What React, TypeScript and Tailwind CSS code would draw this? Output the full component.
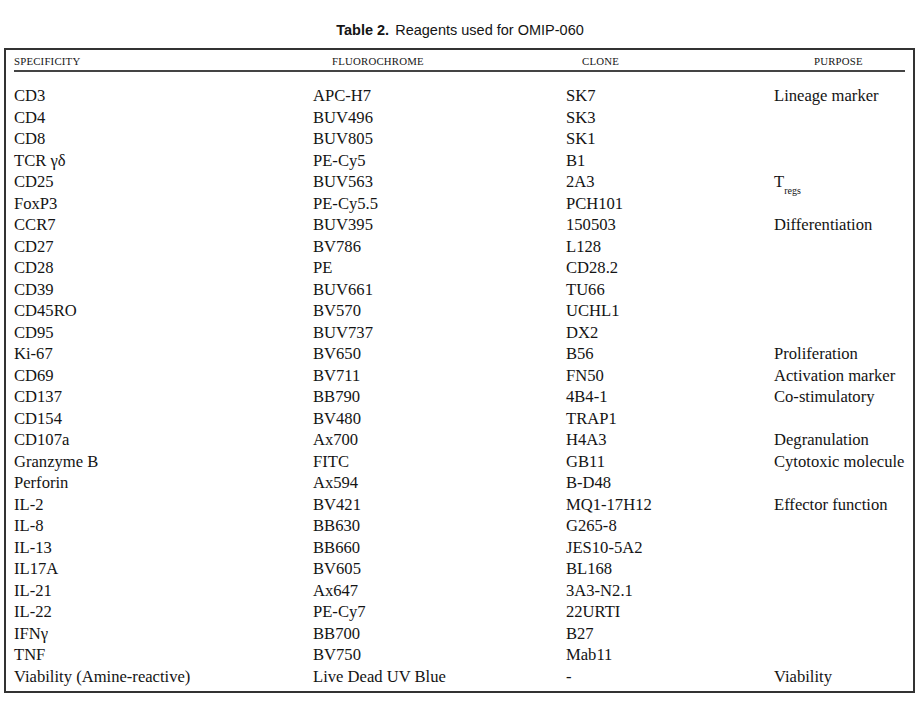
import React from 'react';

type Row = [string, string, string, React.ReactNode?];

const rows: Row[] = [
  ['CD3', 'APC-H7', 'SK7', 'Lineage marker'],
  ['CD4', 'BUV496', 'SK3'],
  ['CD8', 'BUV805', 'SK1'],
  ['TCR γδ', 'PE-Cy5', 'B1'],
  ['CD25', 'BUV563', '2A3', <span key="t">T<sub className="text-[10px] align-[-4px]">regs</sub></span>],
  ['FoxP3', 'PE-Cy5.5', 'PCH101'],
  ['CCR7', 'BUV395', '150503', 'Differentiation'],
  ['CD27', 'BV786', 'L128'],
  ['CD28', 'PE', 'CD28.2'],
  ['CD39', 'BUV661', 'TU66'],
  ['CD45RO', 'BV570', 'UCHL1'],
  ['CD95', 'BUV737', 'DX2'],
  ['Ki-67', 'BV650', 'B56', 'Proliferation'],
  ['CD69', 'BV711', 'FN50', 'Activation marker'],
  ['CD137', 'BB790', '4B4-1', 'Co-stimulatory'],
  ['CD154', 'BV480', 'TRAP1'],
  ['CD107a', 'Ax700', 'H4A3', 'Degranulation'],
  ['Granzyme B', 'FITC', 'GB11', 'Cytotoxic molecule'],
  ['Perforin', 'Ax594', 'B-D48'],
  ['IL-2', 'BV421', 'MQ1-17H12', 'Effector function'],
  ['IL-8', 'BB630', 'G265-8'],
  ['IL-13', 'BB660', 'JES10-5A2'],
  ['IL17A', 'BV605', 'BL168'],
  ['IL-21', 'Ax647', '3A3-N2.1'],
  ['IL-22', 'PE-Cy7', '22URTI'],
  ['IFNγ', 'BB700', 'B27'],
  ['TNF', 'BV750', 'Mab11'],
  ['Viability (Amine-reactive)', 'Live Dead UV Blue', '-', 'Viability'],
];

const cols = 'grid grid-cols-[299px_253px_208px_1fr]';

export default function App() {
  return (
    <div className="w-[920px] h-[704px] bg-white text-[#141414] overflow-hidden">
      <h1 className="pt-[21px] h-[48px] text-center text-[14.5px] leading-[18px] font-['Liberation_Sans',Arial,sans-serif]">
        <span className="font-bold">Table 2.</span>
        <span className="ml-[6px]">Reagents used for OMIP-060</span>
      </h1>

      <div className="ml-[4px] w-[911px] border-2 border-[#333] pl-[8px] pr-[8px] pb-[4px] font-['Liberation_Serif','Times_New_Roman',serif]">
        <div className={`${cols} h-[22px] items-center pt-[2px] text-[10.8px] tracking-[0.2px] border-b-2 border-[#444]`}>
          <div>SPECIFICITY</div>
          <div className="pl-[19px]">FLUOROCHROME</div>
          <div className="pl-[16px]">CLONE</div>
          <div className="pl-[40px]">PURPOSE</div>
        </div>

        <div className="pt-[13px]">
          {rows.map(([spec, fluoro, clone, purpose], i) => (
            <div key={i} className={`${cols} h-[21.52px] leading-[21.52px] text-[16.6px]`}>
              <div>{spec}</div>
              <div>{fluoro}</div>
              <div>{clone}</div>
              <div className="whitespace-nowrap">{purpose}</div>
            </div>
          ))}
        </div>
      </div>
    </div>
  );
}
